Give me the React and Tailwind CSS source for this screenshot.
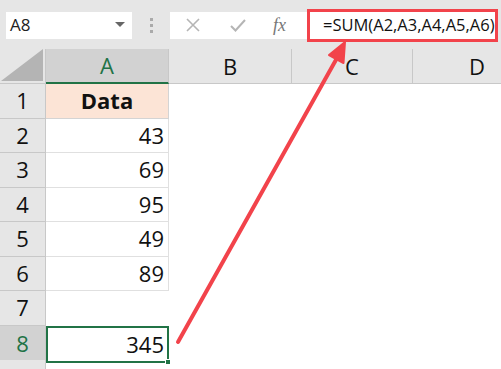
import React from 'react';

const font = { fontFamily: '"Open Sans", "Liberation Sans", sans-serif' };

const rows = [
  { n: 1, v: 'Data', head: true },
  { n: 2, v: '43' },
  { n: 3, v: '69' },
  { n: 4, v: '95' },
  { n: 5, v: '49' },
  { n: 6, v: '89' },
  { n: 7, v: '' },
  { n: 8, v: '345', active: true },
  { n: '', v: '' },
];

function Toolbar() {
  return (
    <div className="flex items-center h-[49px] bg-[#e6e6e6] pt-[1px]">
      <div className="ml-[6px] w-[126px] h-[27px] bg-white flex items-center justify-between px-[4px]">
        <span className="text-[17px] text-[#222]">A8</span>
        <svg width="10" height="6" viewBox="0 0 10 6" className="mr-[3px]">
          <path d="M0 0 L10 0 L5 5 Z" fill="#666" />
        </svg>
      </div>
      <div className="w-[38px] flex flex-col items-center gap-[3px]">
        <div className="w-[3px] h-[3px] bg-[#aaa]" />
        <div className="w-[3px] h-[3px] bg-[#aaa]" />
        <div className="w-[3px] h-[3px] bg-[#aaa]" />
      </div>
      <div className="flex-1 h-[27px] bg-white flex items-center mr-[4px] relative">
        <div className="w-[137px] flex items-center h-full">
          <svg width="14" height="14" viewBox="0 0 14 14" className="ml-[16px]">
            <path d="M1 1 L13 13 M13 1 L1 13" stroke="#b5b5b5" strokeWidth="1.6" />
          </svg>
          <svg width="16" height="14" viewBox="0 0 16 14" className="ml-[30px]">
            <path d="M1 8 L5.5 12.5 L15 2" stroke="#b5b5b5" strokeWidth="2" fill="none" />
          </svg>
          <span className="ml-[27px] text-[18px] italic text-[#777]" style={{ fontFamily: '"Liberation Serif", serif' }}>fx</span>
        </div>
        <div className="absolute left-[137px] top-[-3px] w-[191px] h-[33px] border-[3px] border-[#f2434b] flex items-center pl-[13px]">
          <span className="text-[16.5px] text-[#111] whitespace-nowrap">=SUM(A2,A3,A4,A5,A6)</span>
        </div>
      </div>
    </div>
  );
}

function Grid() {
  const cols = 'grid grid-cols-[46px_123px_123px_121px_128px] w-[541px]';
  return (
    <div>
      <div className={`${cols} h-[35px] bg-[#e6e6e6]`}>
        <div className="border-r border-b border-[#c8c8c8] relative bg-[#e6e6e6]">
          <svg width="44" height="32" viewBox="0 0 44 32" className="absolute right-[2px] bottom-[2px]">
            <path d="M44 0 L44 32 L2 32 Z" fill="#b4b4b4" />
          </svg>
        </div>
        <div className="bg-[#d2d2d2] border-b-2 border-[#217346] border-r border-r-[#c8c8c8] flex items-center justify-center text-[22px] text-[#217346]">A</div>
        <div className="border-r border-b border-[#c8c8c8] flex items-center justify-center text-[22px] text-[#111]">B</div>
        <div className="border-r border-b border-[#c8c8c8] flex items-center justify-center text-[22px] text-[#111]">C</div>
        <div className="border-b border-[#c8c8c8] flex items-center justify-center text-[22px] text-[#111]">D</div>
      </div>
      {rows.map((r, i) => (
        <div key={i} className={`${cols} h-[34.5px]`}>
          <div
            className={`border-r border-b border-[#c8c8c8] flex items-center justify-center text-[22px] ${
              r.active ? 'bg-[#d2d2d2] text-[#217346]' : 'bg-[#e6e6e6] text-[#111]'
            }`}
          >
            {r.n}
          </div>
          {r.head ? (
            <div className="bg-[#fce4d6] border-r border-b border-[#d4d4d4] flex items-center justify-center text-[22px] font-bold text-[#111]">
              {r.v}
            </div>
          ) : r.active ? (
            <div className="relative border-2 border-[#217346] flex items-center justify-end pr-[3px] text-[22px] text-[#111]">
              {r.v}
              <div className="absolute right-[-4px] bottom-[-4px] w-[6px] h-[6px] bg-[#217346] border border-white" />
            </div>
          ) : (
            <div className={`border-r border-b ${i < 6 ? 'border-[#e0e0e0]' : 'border-transparent'} flex items-center justify-end pr-[4px] text-[22px] text-[#111]`}>
              {r.v}
            </div>
          )}
          <div />
          <div />
          <div />
        </div>
      ))}
    </div>
  );
}

export default function App() {
  return (
    <div className="relative w-[501px] h-[369px] overflow-hidden bg-white" style={font}>
      <Toolbar />
      <Grid />
      <svg className="absolute left-0 top-0 pointer-events-none" width="501" height="369" viewBox="0 0 501 369">
        <line x1="178" y1="342" x2="337" y2="58" stroke="#f2434b" strokeWidth="4" strokeLinecap="round" />
        <path d="M345 42 L343.5 63 L329 55 Z" fill="#f2434b" stroke="#f2434b" strokeWidth="2" strokeLinejoin="round" />
      </svg>
    </div>
  );
}
